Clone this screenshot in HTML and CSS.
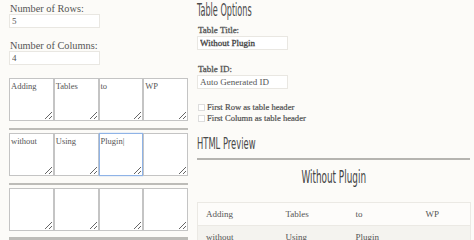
FILE: index.html
```html
<!DOCTYPE html>
<html>
<head>
<meta charset="utf-8">
<link rel="stylesheet" href="styles.css">
</head>
<body>
<div class="page">
  <div class="left">
    <label class="lbl">Number of Rows:</label>
    <input class="field" type="text" value="5">
    <label class="lbl lbl2">Number of Columns:</label>
    <input class="field" type="text" value="4">
    <div class="grid">
      <div class="trow">
        <textarea class="cell">Adding</textarea><textarea class="cell">Tables</textarea><textarea class="cell">to</textarea><textarea class="cell">WP</textarea>
      </div>
      <div class="sep"></div>
      <div class="trow">
        <textarea class="cell">without</textarea><textarea class="cell">Using</textarea><textarea class="cell focus">Plugin|</textarea><textarea class="cell"></textarea>
      </div>
      <div class="sep"></div>
      <div class="trow">
        <textarea class="cell"></textarea><textarea class="cell"></textarea><textarea class="cell"></textarea><textarea class="cell"></textarea>
      </div>
      <div class="sep thick"></div>
    </div>
  </div>
  <div class="right">
    <h2 class="head"><span>Table Options</span></h2>
    <label class="rlbl">Table Title:</label>
    <input class="field rfield strong" type="text" value="Without Plugin">
    <label class="rlbl rlbl2">Table ID:</label>
    <input class="field rfield" type="text" value="Auto Generated ID">
    <div class="checks">
      <div class="chk"><span class="box"></span><span>First Row as table header</span></div>
      <div class="chk"><span class="box"></span><span>First Column as table header</span></div>
    </div>
    <h2 class="head head2"><span>HTML Preview</span></h2>
    <div class="preview">
      <h3 class="ptitle"><span>Without Plugin</span></h3>
      <table class="ptable">
        <colgroup><col class="c1"><col class="c2"><col class="c3"><col class="c4"></colgroup>
        <tr><td>Adding</td><td>Tables</td><td>to</td><td>WP</td></tr>
        <tr class="alt"><td>without</td><td>Using</td><td>Plugin</td><td></td></tr>
      </table>
    </div>
  </div>
</div>
</body>
</html>
```

FILE: styles.css
```css
html, body {
  margin: 0;
  padding: 0;
  background: #fcfbf8;
  overflow: hidden;
}
body {
  font-family: "Liberation Serif", serif;
  color: #555;
  width: 474px;
  height: 240px;
}
.page {
  display: flex;
  padding-left: 9px;
}
.left {
  width: 179px;
  display: flex;
  flex-direction: column;
  align-items: flex-start;
}
.lbl {
  display: block;
  font-size: 10.3px;
  line-height: 11px;
  margin-top: 3px;
  padding-left: 1px;
  color: #555;
  white-space: nowrap;
}
.lbl2 {
  margin-top: 12px;
}
.field {
  box-sizing: border-box;
  width: 91px;
  height: 14px;
  margin: 0;
  padding: 0 2px;
  border: 1px solid #e9e7e2;
  background: #fff;
  font-family: "Liberation Serif", serif;
  font-size: 9px;
  color: #555;
  outline: none;
}
.grid {
  margin-top: 13px;
  width: 179px;
}
.trow {
  display: flex;
  height: 43px;
}
.cell {
  box-sizing: border-box;
  width: 45px;
  height: 43px;
  margin: 0;
  padding: 2px 1px;
  border: 1px solid #c4c4c4;
  background: #fff;
  font-family: "Liberation Serif", serif;
  font-size: 8.5px;
  line-height: 10px;
  color: #555;
  resize: both;
  outline: none;
  overflow: hidden;
}
.cell.focus {
  border-color: #8fb3e6;
  box-shadow: 0 0 1px #9dbce9;
}
.sep {
  height: 2px;
  background: #bdbcb8;
  margin: 7px 0 3px;
}
.sep.thick {
  height: 4px;
  margin-top: 6px;
}
.right {
  margin-left: 9px;
  width: 273px;
  display: flex;
  flex-direction: column;
  align-items: flex-start;
}
.head {
  margin: 0;
  height: 20px;
  font-family: "DejaVu Sans Condensed", "DejaVu Sans", sans-serif;
  font-weight: normal;
  font-size: 17px;
  line-height: 20px;
  color: #4a4a4a;
  white-space: nowrap;
}
.head span {
  display: inline-block;
  transform: scaleX(0.53);
  transform-origin: left center;
}
.rlbl {
  display: block;
  font-size: 9px;
  line-height: 11px;
  margin-top: 5px;
  padding-left: 1px;
  color: #555;
  letter-spacing: 0;
  -webkit-text-stroke: 0.3px #555;
}
.rlbl2 {
  margin-top: 14px;
}
.strong {
  color: #444;
  -webkit-text-stroke: 0.3px #444;
}
.checks {
  margin-top: 13px;
}
.chk {
  display: flex;
  align-items: center;
  gap: 2px;
  font-size: 8.6px;
  line-height: 11px;
  color: #4f4f4f;
  -webkit-text-stroke: 0.2px #4f4f4f;
  margin-left: 1px;
  white-space: nowrap;
}
.box {
  display: inline-block;
  width: 5px;
  height: 5px;
  border: 1px solid #ddd;
  background: #fff;
}
.head2 {
  margin-top: 10px;
  font-size: 15px;
}
.head2 span {
  transform: scaleX(0.62);
}
.preview {
  margin-top: 4px;
  width: 273px;
  border-top: 2px solid #b5b4b0;
}
.ptitle {
  margin: 0;
  height: 42px;
  text-align: center;
  font-family: "DejaVu Sans Condensed", "DejaVu Sans", sans-serif;
  font-weight: normal;
  font-size: 17px;
  line-height: 28px;
  padding-top: 3px;
  box-sizing: border-box;
  color: #444;
}
.ptitle span {
  display: inline-block;
  transform: scaleX(0.58);
}
.ptable {
  width: 273px;
  border-collapse: collapse;
  table-layout: fixed;
  font-size: 9px;
  color: #555;
}
.c1 { width: 80px; }
.c2 { width: 70px; }
.c3 { width: 70px; }
.c4 { width: 53px; }
.ptable td {
  height: 22px;
  padding: 0 8px;
  border-top: 1px solid #ebe9e4;
  border-bottom: 1px solid #ebe9e4;
  background: #fdfcfa;
}
.ptable tr td:first-child { border-left: 1px solid #ebe9e4; }
.ptable tr td:last-child { border-right: 1px solid #ebe9e4; }
.ptable tr.alt td {
  background: #f4f3ef;
}
```
